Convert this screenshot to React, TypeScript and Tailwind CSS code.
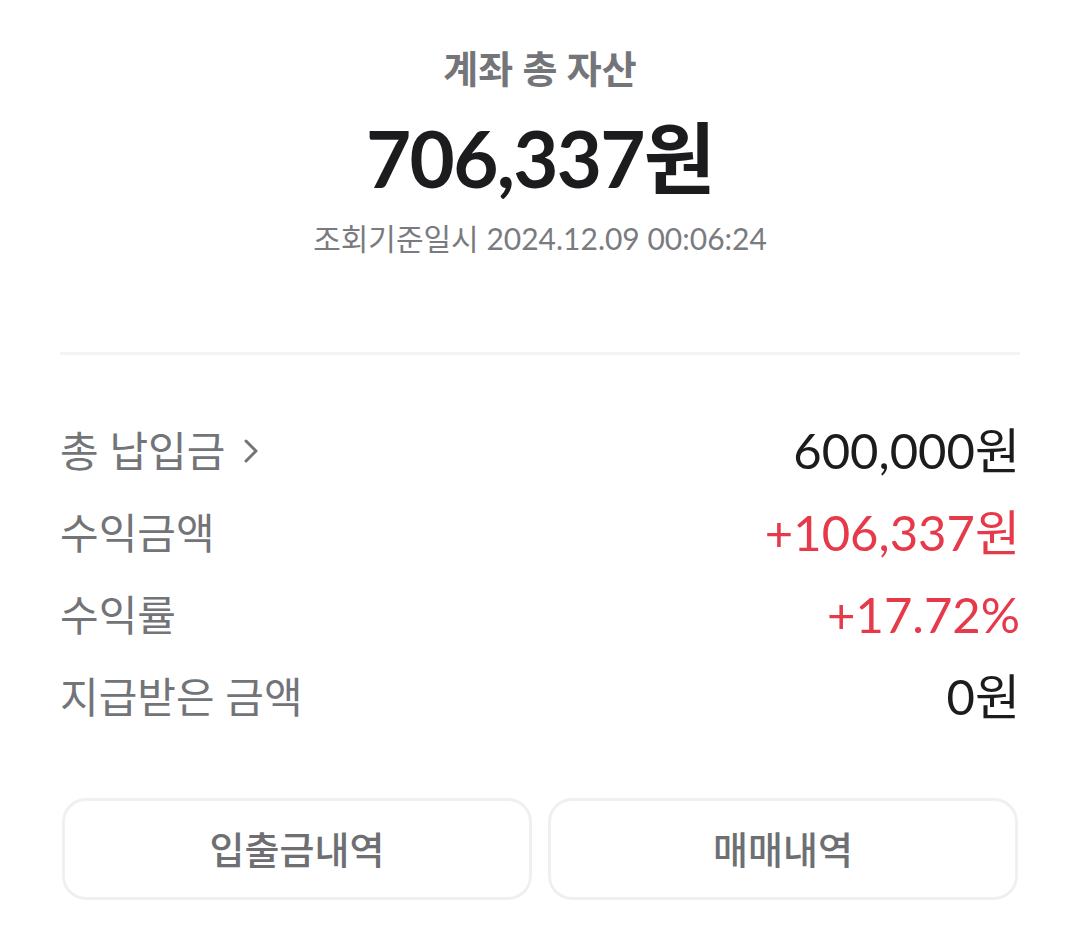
import React from "react";

const font = { fontFamily: 'Lato, "Noto Sans CJK KR", sans-serif' };

function Row({ label, value, chevron, red }: { label: string; value: string; chevron?: boolean; red?: boolean }) {
  return (
    <div className="flex items-center justify-between h-[82px]">
      <div className="flex items-center text-[42px] text-[#727478]">
        <span>{label}</span>
        {chevron && (
          <svg width="24" height="32" viewBox="0 0 24 32" className="ml-[14px]" fill="none">
            <path d="M7 6 L17 16 L7 26" stroke="#727478" strokeWidth="3" strokeLinecap="round" strokeLinejoin="round" />
          </svg>
        )}
      </div>
      <div className={`text-[49px] ${red ? "text-[#e63a4b]" : "text-[#1c1c1e]"}`}>{value}</div>
    </div>
  );
}

export default function App() {
  return (
    <div className="w-[1080px] h-[952px] bg-white px-[60px]" style={font}>
      <div className="flex flex-col items-center pt-[44px]">
        <div className="text-[38px] font-bold text-[#747579] leading-[48px]">계좌 총 자산</div>
        <div className="text-[78px] font-bold tracking-[-1.7px] text-[#1c1c1e] leading-[96px] mt-[18px]">706,337원</div>
        <div className="text-[30px] text-[#7a7b80] leading-[40px] mt-[12px]">조회기준일시 2024.12.09 00:06:24</div>
      </div>
      <div className="h-[3px] bg-[#f2f3f5] mt-[94px]" />
      <div className="mt-[55px]">
        <Row label="총 납입금" value="600,000원" chevron />
        <Row label="수익금액" value="+106,337원" red />
        <Row label="수익률" value="+17.72%" red />
        <Row label="지급받은 금액" value="0원" />
      </div>
      <div className="grid grid-cols-2 gap-[16px] mt-[60px] px-[2px]">
        <button className="h-[102px] rounded-[24px] border-[3px] border-[#f0f0f0] text-[38px] font-medium text-[#6e6f73]">입출금내역</button>
        <button className="h-[102px] rounded-[24px] border-[3px] border-[#f0f0f0] text-[38px] font-medium text-[#6e6f73]">매매내역</button>
      </div>
    </div>
  );
}
